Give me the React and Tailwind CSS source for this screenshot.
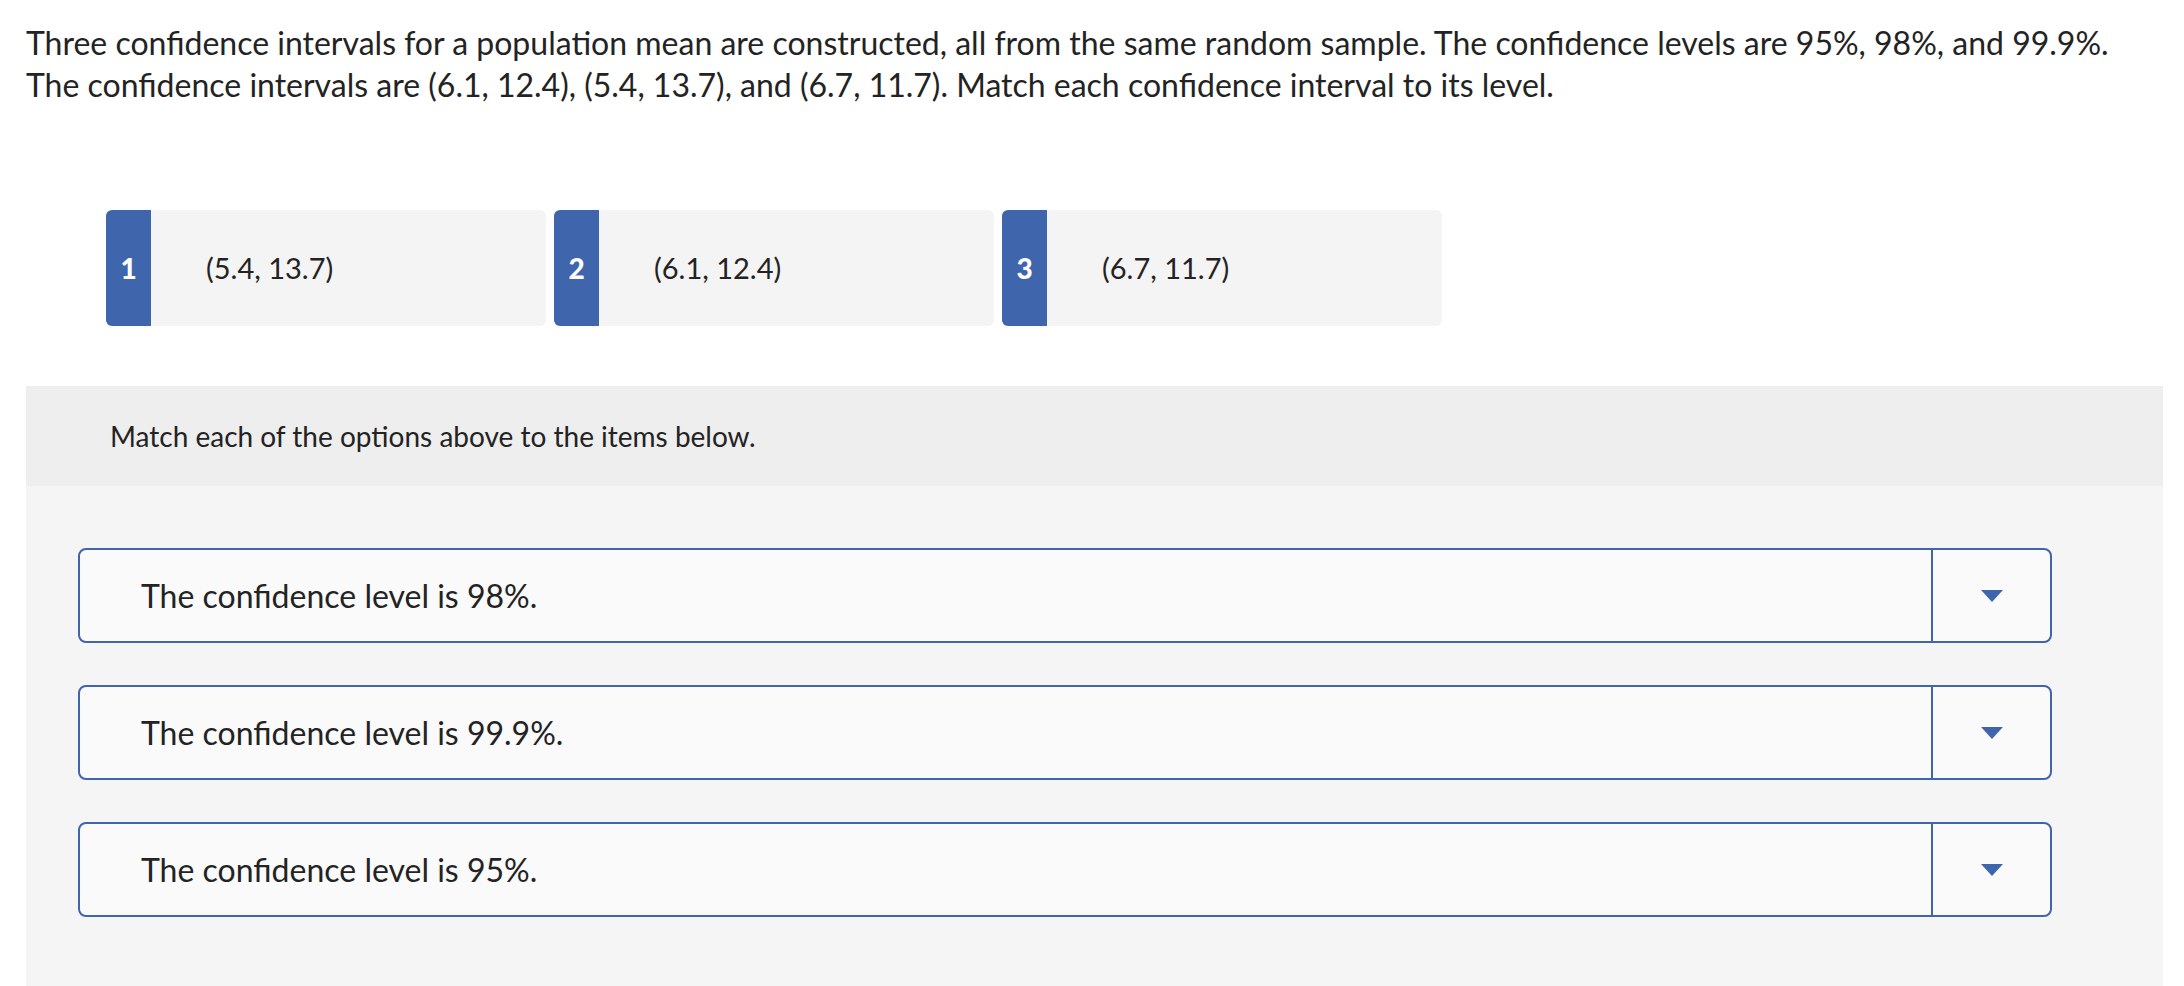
import React from "react";

const cards = [
  { n: "1", t: "(5.4, 13.7)" },
  { n: "2", t: "(6.1, 12.4)" },
  { n: "3", t: "(6.7, 11.7)" },
];

const rows = [
  "The confidence level is 98%.",
  "The confidence level is 99.9%.",
  "The confidence level is 95%.",
];

export default function App() {
  return (
    <div
      className="w-[2184px] h-[986px] overflow-hidden bg-white text-[#232323]"
      style={{ fontFamily: "Lato, 'Open Sans', sans-serif" }}
    >
      <div className="pl-[26px] pr-[21px] pt-[22px]">
        <p className="text-[32px] leading-[42px] whitespace-nowrap">
          Three confidence intervals for a population mean are constructed, all from the same random sample. The confidence levels are 95%, 98%, and 99.9%.
          <br />
          The confidence intervals are (6.1, 12.4), (5.4, 13.7), and (6.7, 11.7). Match each confidence interval to its level.
        </p>

        <div className="mt-[104px] ml-[80px] flex gap-[8px]">
          {cards.map((c) => (
            <div key={c.n} className="w-[440px] h-[116px] flex rounded-[6px] bg-[#f4f4f4]">
              <div className="w-[45px] h-full rounded-l-[6px] bg-[#3f65ac] flex items-center justify-center text-white font-black text-[28px]">
                {c.n}
              </div>
              <div className="flex items-center pl-[55px] text-[29px]">{c.t}</div>
            </div>
          ))}
        </div>

        <div className="mt-[60px] w-[2137px] h-[620px] bg-[#f5f5f5]">
          <div className="h-[100px] bg-[#eeeeee] flex items-center pl-[84px] text-[28px]">
            Match each of the options above to the items below.
          </div>
          <div className="pt-[62px] pl-[52px] flex flex-col gap-[42px]">
            {rows.map((r) => (
              <div
                key={r}
                className="w-[1974px] h-[95px] flex rounded-[8px] border-2 border-[#3f65ac] bg-[#fafafa]"
              >
                <div className="flex-1 flex items-center pl-[61px] text-[32px]">{r}</div>
                <div className="w-[119px] h-full border-l-2 border-[#3f65ac] flex items-center justify-center">
                  <svg width="22" height="12" viewBox="0 0 22 12">
                    <path d="M0 0 H22 L11 12 Z" fill="#3f65ac" />
                  </svg>
                </div>
              </div>
            ))}
          </div>
        </div>
      </div>
    </div>
  );
}
